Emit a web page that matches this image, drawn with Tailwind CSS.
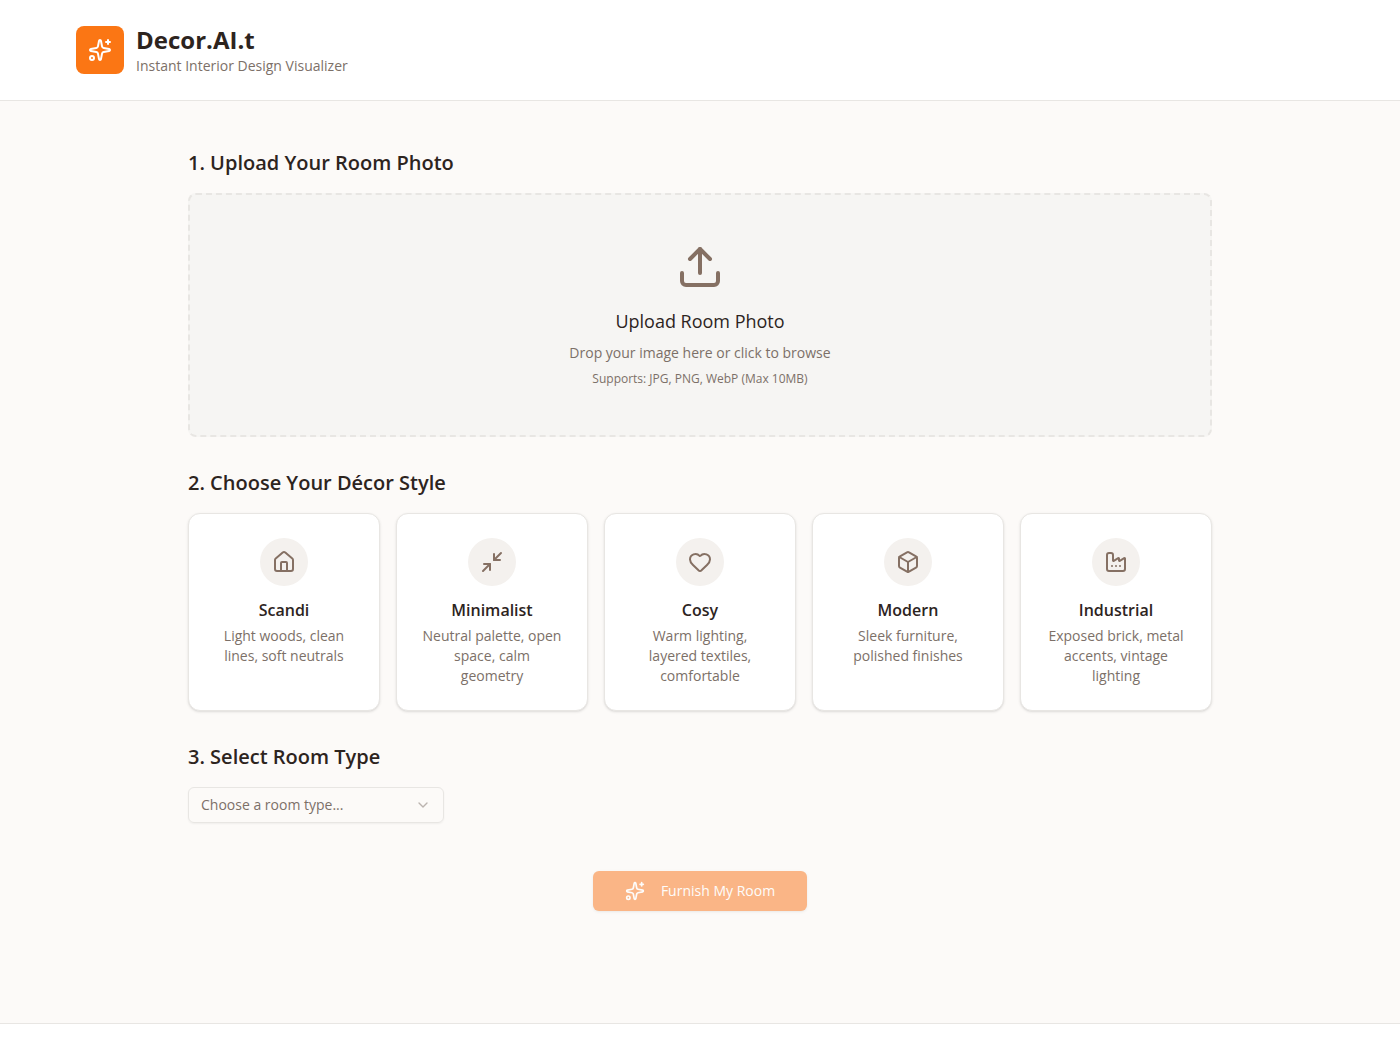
<!DOCTYPE html>
<html lang="en">
<head>
  <meta charset="UTF-8">
  <meta name="viewport" content="width=device-width, initial-scale=1.0">
  <title>Decor.AI.t - Instant Interior Design Visualizer</title>
  <script src="https://cdn.jsdelivr.net/npm/@tailwindcss/browser@4"></script>
</head>
<body class="flex min-h-screen flex-col bg-[#fcfaf8] text-[#2d241e] font-['Open_Sans',sans-serif]">
  <header class="border-b border-[#e8e6e3] bg-white">
    <div class="mx-auto flex w-full max-w-7xl items-center gap-3 px-4 py-6">
      <div class="flex size-12 items-center justify-center rounded-lg bg-[#fb7614] text-white">
        <svg class="size-6" viewBox="0 0 24 24" fill="none" stroke="currentColor" stroke-width="2" stroke-linecap="round" stroke-linejoin="round" aria-hidden="true">
          <path d="M11.017 2.814a1 1 0 0 1 1.966 0l1.051 5.558a2 2 0 0 0 1.594 1.594l5.558 1.051a1 1 0 0 1 0 1.966l-5.558 1.051a2 2 0 0 0-1.594 1.594l-1.051 5.558a1 1 0 0 1-1.966 0l-1.051-5.558a2 2 0 0 0-1.594-1.594l-5.558-1.051a1 1 0 0 1 0-1.966l5.558-1.051a2 2 0 0 0 1.594-1.594z"/><path d="M20 2v4"/><path d="M22 4h-4"/><circle cx="4" cy="20" r="2"/>
        </svg>
      </div>
      <div>
        <h1 class="text-2xl font-bold">Decor.AI.t</h1>
        <p class="text-sm text-[#7c7068]">Instant Interior Design Visualizer</p>
      </div>
    </div>
  </header>

  <main class="mx-auto w-full max-w-7xl px-4 py-12">
    <div class="mx-auto flex max-w-5xl flex-col gap-8">
      <!-- Step 1: photo -->
      <section>
        <h2 class="mb-4 text-xl font-semibold">1. Upload Your Room Photo</h2>
        <label for="room-photo" class="flex cursor-pointer flex-col items-center rounded-lg border-2 border-dashed border-[#e8e6e3] bg-[#f6f5f3] p-12 text-center">
          <svg class="mb-4 size-12 text-[#857063]" viewBox="0 0 24 24" fill="none" stroke="currentColor" stroke-width="2" stroke-linecap="round" stroke-linejoin="round" aria-hidden="true">
            <path d="M12 3v12"/><path d="m17 8-5-5-5 5"/><path d="M21 15v4a2 2 0 0 1-2 2H5a2 2 0 0 1-2-2v-4"/>
          </svg>
          <span class="mb-2 text-lg font-medium">Upload Room Photo</span>
          <span class="mb-2 text-sm text-[#7c7068]">Drop your image here or click to browse</span>
          <span class="text-xs text-[#7c7068]">Supports: JPG, PNG, WebP (Max 10MB)</span>
          <input id="room-photo" type="file" accept="image/jpeg,image/png,image/webp" class="sr-only">
        </label>
      </section>

      <!-- Step 2: style -->
      <section>
        <h2 class="mb-4 text-xl font-semibold">2. Choose Your Décor Style</h2>
        <div class="grid grid-cols-2 gap-4 md:grid-cols-5">
          <button type="button" class="flex cursor-pointer flex-col items-center rounded-xl border border-[#e8e6e3] bg-white p-6 text-center shadow-sm">
            <span class="mb-3 flex size-12 items-center justify-center rounded-full bg-[#f4f1ee] text-[#857063]">
              <svg class="size-6" viewBox="0 0 24 24" fill="none" stroke="currentColor" stroke-width="2" stroke-linecap="round" stroke-linejoin="round" aria-hidden="true">
                <path d="M15 21v-8a1 1 0 0 0-1-1h-4a1 1 0 0 0-1 1v8"/><path d="M3 10a2 2 0 0 1 .709-1.528l7-5.999a2 2 0 0 1 2.582 0l7 5.999A2 2 0 0 1 21 10v9a2 2 0 0 1-2 2H5a2 2 0 0 1-2-2z"/>
              </svg>
            </span>
            <span class="mb-1 font-semibold">Scandi</span>
            <span class="text-sm text-[#7c7068]">Light woods, clean lines, soft neutrals</span>
          </button>
          <button type="button" class="flex cursor-pointer flex-col items-center rounded-xl border border-[#e8e6e3] bg-white p-6 text-center shadow-sm">
            <span class="mb-3 flex size-12 items-center justify-center rounded-full bg-[#f4f1ee] text-[#857063]">
              <svg class="size-6" viewBox="0 0 24 24" fill="none" stroke="currentColor" stroke-width="2" stroke-linecap="round" stroke-linejoin="round" aria-hidden="true">
                <path d="m14 10 7-7"/><path d="M20 10h-6V4"/><path d="m3 21 7-7"/><path d="M4 14h6v6"/>
              </svg>
            </span>
            <span class="mb-1 font-semibold">Minimalist</span>
            <span class="text-sm text-[#7c7068]">Neutral palette, open space, calm<br>geometry</span>
          </button>
          <button type="button" class="flex cursor-pointer flex-col items-center rounded-xl border border-[#e8e6e3] bg-white p-6 text-center shadow-sm">
            <span class="mb-3 flex size-12 items-center justify-center rounded-full bg-[#f4f1ee] text-[#857063]">
              <svg class="size-6" viewBox="0 0 24 24" fill="none" stroke="currentColor" stroke-width="2" stroke-linecap="round" stroke-linejoin="round" aria-hidden="true">
                <path d="M2 9.5a5.5 5.5 0 0 1 9.591-3.676.56.56 0 0 0 .818 0A5.49 5.49 0 0 1 22 9.5c0 2.29-1.5 4-3 5.5l-5.492 5.313a2 2 0 0 1-3 .019L5 15c-1.5-1.5-3-3.2-3-5.5"/>
              </svg>
            </span>
            <span class="mb-1 font-semibold">Cosy</span>
            <span class="text-sm text-[#7c7068]">Warm lighting, layered textiles, comfortable</span>
          </button>
          <button type="button" class="flex cursor-pointer flex-col items-center rounded-xl border border-[#e8e6e3] bg-white p-6 text-center shadow-sm">
            <span class="mb-3 flex size-12 items-center justify-center rounded-full bg-[#f4f1ee] text-[#857063]">
              <svg class="size-6" viewBox="0 0 24 24" fill="none" stroke="currentColor" stroke-width="2" stroke-linecap="round" stroke-linejoin="round" aria-hidden="true">
                <path d="M21 8a2 2 0 0 0-1-1.73l-7-4a2 2 0 0 0-2 0l-7 4A2 2 0 0 0 3 8v8a2 2 0 0 0 1 1.73l7 4a2 2 0 0 0 2 0l7-4A2 2 0 0 0 21 16Z"/><path d="m3.3 7 8.7 5 8.7-5"/><path d="M12 22V12"/>
              </svg>
            </span>
            <span class="mb-1 font-semibold">Modern</span>
            <span class="text-sm text-[#7c7068]">Sleek furniture, polished finishes</span>
          </button>
          <button type="button" class="flex cursor-pointer flex-col items-center rounded-xl border border-[#e8e6e3] bg-white p-6 text-center shadow-sm">
            <span class="mb-3 flex size-12 items-center justify-center rounded-full bg-[#f4f1ee] text-[#857063]">
              <svg class="size-6" viewBox="0 0 24 24" fill="none" stroke="currentColor" stroke-width="2" stroke-linecap="round" stroke-linejoin="round" aria-hidden="true">
                <path d="M12 16h.01"/><path d="M16 16h.01"/><path d="M3 19a2 2 0 0 0 2 2h14a2 2 0 0 0 2-2V8.5a.5.5 0 0 0-.769-.422l-4.462 2.844A.5.5 0 0 1 15 10.5v-2a.5.5 0 0 0-.769-.422L9.77 10.922A.5.5 0 0 1 9 10.5V5a2 2 0 0 0-2-2H5a2 2 0 0 0-2 2z"/><path d="M8 16h.01"/>
              </svg>
            </span>
            <span class="mb-1 font-semibold">Industrial</span>
            <span class="text-sm text-[#7c7068]">Exposed brick, metal accents, vintage lighting</span>
          </button>
        </div>
      </section>

      <!-- Step 3: room type -->
      <section>
        <h2 class="mb-4 text-xl font-semibold"><label for="room-type">3. Select Room Type</label></h2>
        <div class="relative w-64">
          <select id="room-type" class="h-9 w-full appearance-none rounded-md border border-[#e8e6e3] bg-transparent px-3 text-sm text-[#7c7068] shadow-xs">
            <option>Choose a room type...</option>
            <option>Living Room</option>
            <option>Bedroom</option>
            <option>Dining Room</option>
            <option>Home Office</option>
          </select>
          <svg class="pointer-events-none absolute inset-y-0 right-[13px] my-auto size-4 text-[#7c7068] opacity-50" viewBox="0 0 24 24" fill="none" stroke="currentColor" stroke-width="2" stroke-linecap="round" stroke-linejoin="round" aria-hidden="true">
            <path d="m6 9 6 6 6-6"/>
          </svg>
        </div>
      </section>

      <div class="flex justify-center py-4">
        <button type="button" disabled class="flex h-10 items-center gap-4 rounded-md bg-[#f97316] px-8 text-sm font-medium text-white opacity-50 shadow-sm">
          <svg class="size-5" viewBox="0 0 24 24" fill="none" stroke="currentColor" stroke-width="2" stroke-linecap="round" stroke-linejoin="round" aria-hidden="true">
            <path d="M11.017 2.814a1 1 0 0 1 1.966 0l1.051 5.558a2 2 0 0 0 1.594 1.594l5.558 1.051a1 1 0 0 1 0 1.966l-5.558 1.051a2 2 0 0 0-1.594 1.594l-1.051 5.558a1 1 0 0 1-1.966 0l-1.051-5.558a2 2 0 0 0-1.594-1.594l-5.558-1.051a1 1 0 0 1 0-1.966l5.558-1.051a2 2 0 0 0 1.594-1.594z"/><path d="M20 2v4"/><path d="M22 4h-4"/><circle cx="4" cy="20" r="2"/>
          </svg>
          Furnish My Room
        </button>
      </div>
    </div>
  </main>

  <footer class="mt-12 flex-1 border-t border-[#e8e6e3] bg-white"></footer>
</body>
</html>
